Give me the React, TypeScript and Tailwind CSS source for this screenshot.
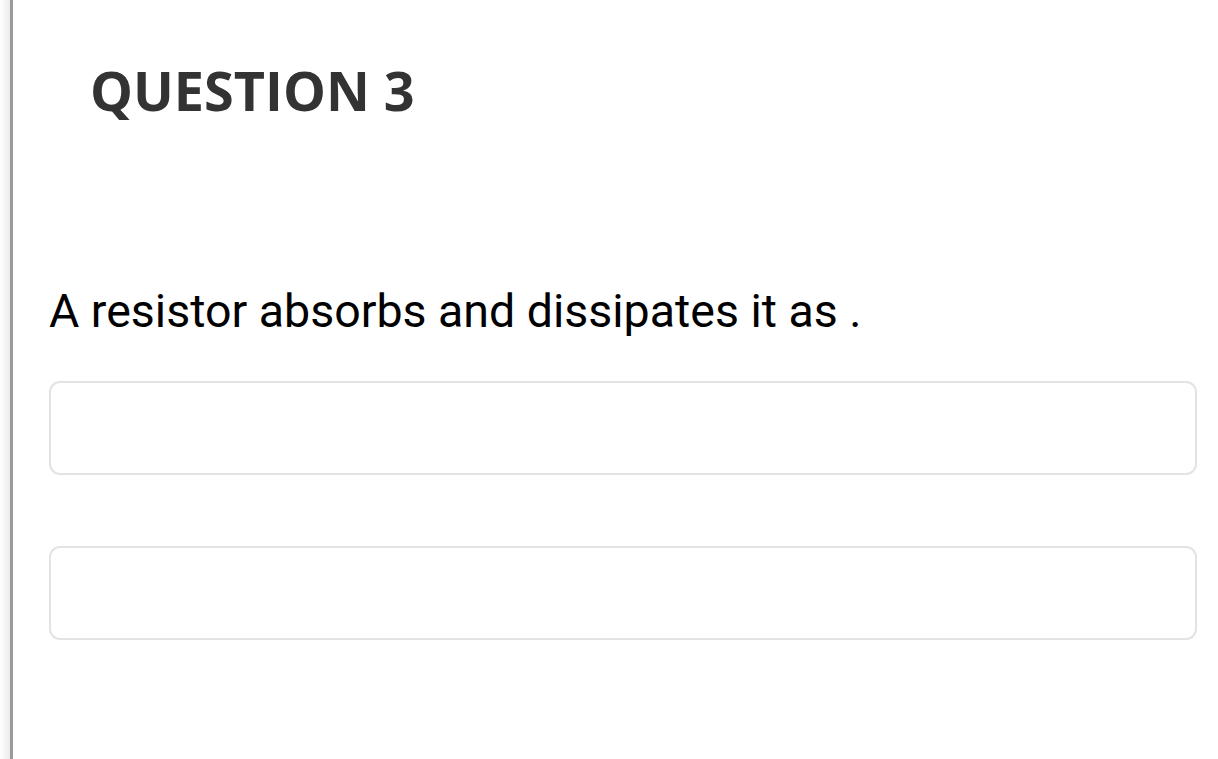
export default function App() {
  return (
    <div className="flex min-h-[759px] w-[1218px] bg-white">
      <div className="w-[10px] shrink-0 bg-gradient-to-r from-white to-[#ececec]" />
      <div className="w-[3px] shrink-0 bg-[#9a9a9a]" />
      <div className="flex flex-1 flex-col pl-[36px] pr-[21px]">
        <h1
          className="mt-[52px] pl-[41px] text-[54px] font-bold leading-[76px] text-[#333333]"
          style={{ fontFamily: '"Open Sans", sans-serif' }}
        >
          QUESTION 3
        </h1>
        <p
          className="mt-[155px] text-[46.5px] leading-[56px] text-black"
          style={{ fontFamily: 'Roboto, sans-serif' }}
        >
          A resistor absorbs and dissipates it as .
        </p>
        <div className="mt-[42px] flex flex-col gap-[71px]">
          <div className="h-[94px] rounded-[11px] border-2 border-[#e3e3e3] bg-white" />
          <div className="h-[94px] rounded-[11px] border-2 border-[#e3e3e3] bg-white" />
        </div>
      </div>
    </div>
  );
}
